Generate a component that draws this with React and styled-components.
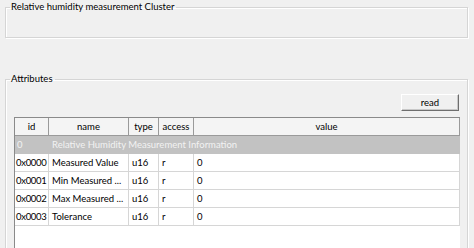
import React from 'react';
import styled, { createGlobalStyle } from 'styled-components';

const GlobalStyle = createGlobalStyle`
  html, body {
    margin: 0;
    padding: 0;
    background: #f0f0f0;
    overflow: hidden;
  }
  body {
    font-family: Lato, "Noto Sans", sans-serif;
    font-size: 9.5px;
    color: #000;
  }
`;

const Page = styled.div`
  width: 474px;
  height: 248px;
  padding: 0 6px 0 5px;
  box-sizing: border-box;
  overflow: hidden;
`;

const GroupBox = styled.fieldset`
  margin: ${(p) => p.top}px 0 0;
  padding: 0 8px;
  border: 1px solid #d5d5d5;
  box-shadow: inset 1px 1px 0 #fff, 1px 1px 0 #fff;
  height: ${(p) => p.height}px;
  box-sizing: border-box;
  min-width: 0;
`;

const Legend = styled.legend`
  padding: 0 2px 0 1px;
  margin-left: -4px;
  line-height: 14px;
  font-size: 9.5px;
  color: #000;
`;

const ButtonRow = styled.div`
  display: flex;
  justify-content: flex-end;
  margin-top: 8px;
`;

const ReadButton = styled.button`
  width: 58px;
  height: 17px;
  padding: 0;
  font-family: inherit;
  font-size: 9.5px;
  line-height: 14px;
  background: #f0f0f0;
  border: 1px solid;
  border-color: #fff #6e6e6e #6e6e6e #fff;
  box-shadow: inset -1px -1px 0 #c8c8c8;
  color: #000;
`;

const Table = styled.div`
  margin-top: 6px;
  width: 446px;
  height: 160px;
  background: #fff;
  border-left: 1px solid #8a8a8a;
  border-top: 1px solid #8a8a8a;
  box-sizing: border-box;
`;

const Row = styled.div`
  display: grid;
  grid-template-columns: 34px 80px 30px 35px 266px;
  height: 18px;
  box-sizing: border-box;
`;

const HeadCell = styled.div`
  background: #f4f4f4;
  border-right: 1px solid #9a9a9a;
  border-bottom: 1px solid #9a9a9a;
  text-align: center;
  line-height: 17px;
  white-space: nowrap;
`;

const GroupRow = styled.div`
  display: flex;
  height: 18px;
  background: #c2c2c2;
  color: #f2f2f2;
  line-height: 18px;
  white-space: nowrap;
`;

const GroupId = styled.span`
  width: 34px;
  padding-left: 2px;
  box-sizing: border-box;
`;

const GroupName = styled.span`
  padding-left: 3px;
`;

const Cell = styled.div`
  border-right: 1px solid #d6d6d6;
  border-bottom: 1px solid #d6d6d6;
  padding-left: ${(p) => p.pl ?? 3}px;
  letter-spacing: ${(p) => p.tight ? '-0.3px' : 'normal'};
  line-height: 17px;
  white-space: nowrap;
  overflow: hidden;
`;

const attributes = [
  { id: '0x0000', name: 'Measured Value', type: 'u16', access: 'r', value: '0' },
  { id: '0x0001', name: 'Min Measured ...', type: 'u16', access: 'r', value: '0' },
  { id: '0x0002', name: 'Max Measured ...', type: 'u16', access: 'r', value: '0' },
  { id: '0x0003', name: 'Tolerance', type: 'u16', access: 'r', value: '0' },
];

export default function App() {
  return (
    <>
      <GlobalStyle />
      <Page>
        <GroupBox top={0} height={38}>
          <Legend>Relative humidity measurement Cluster</Legend>
        </GroupBox>
        <GroupBox top={34} height={190}>
          <Legend>Attributes</Legend>
          <ButtonRow>
            <ReadButton>read</ReadButton>
          </ButtonRow>
          <Table>
            <Row>
              <HeadCell>id</HeadCell>
              <HeadCell>name</HeadCell>
              <HeadCell>type</HeadCell>
              <HeadCell>access</HeadCell>
              <HeadCell>value</HeadCell>
            </Row>
            <GroupRow>
              <GroupId>0</GroupId>
              <GroupName>Relative Humidity Measurement Information</GroupName>
            </GroupRow>
            {attributes.map((a) => (
              <Row key={a.id}>
                <Cell pl={1} tight>{a.id}</Cell>
                <Cell>{a.name}</Cell>
                <Cell>{a.type}</Cell>
                <Cell>{a.access}</Cell>
                <Cell>{a.value}</Cell>
              </Row>
            ))}
          </Table>
        </GroupBox>
      </Page>
    </>
  );
}
